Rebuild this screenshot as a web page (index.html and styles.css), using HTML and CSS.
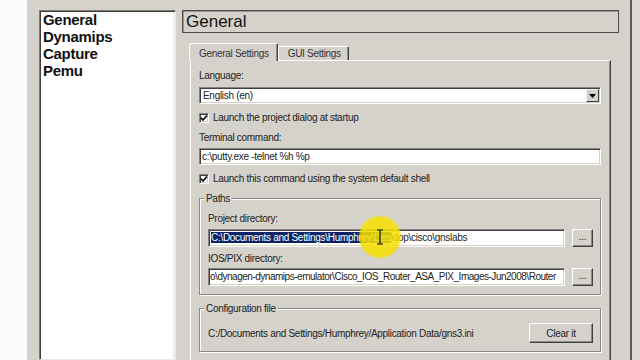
FILE: index.html
```html
<!DOCTYPE html>
<html>
<head>
<meta charset="utf-8">
<link rel="stylesheet" href="styles.css">
</head>
<body>
<div class="screen">
  <div class="outside-left"></div>
  <div class="window">
    <div class="sidebar">
      <ul class="nav">
        <li>General</li>
        <li>Dynamips</li>
        <li>Capture</li>
        <li>Pemu</li>
      </ul>
    </div>
    <div class="main">
      <div class="title">General</div>
      <div class="tabwidget">
        <div class="tabbar">
          <div class="tab active">General Settings</div>
          <div class="tab">GUI Settings</div>
        </div>
        <div class="pane">
          <div class="label">Language:</div>
          <div class="combo sunken">
            <span>English (en)</span>
            <span class="drop"><svg width="7" height="4" viewBox="0 0 7 4"><path d="M0 0H7L3.5 4Z" fill="#000"/></svg></span>
          </div>
          <div class="check">
            <span class="box sunken"><svg width="8" height="8" viewBox="0 0 8 8"><path d="M1 3.8L3 6L7 1.5" fill="none" stroke="#000" stroke-width="1.6"/></svg></span>
            <span>Launch the project dialog at startup</span>
          </div>
          <div class="label gap7">Terminal command:</div>
          <div class="field sunken">c:\putty.exe -telnet %h %p</div>
          <div class="check">
            <span class="box sunken"><svg width="8" height="8" viewBox="0 0 8 8"><path d="M1 3.8L3 6L7 1.5" fill="none" stroke="#000" stroke-width="1.6"/></svg></span>
            <span>Launch this command using the system default shell</span>
          </div>
          <fieldset class="group">
            <legend>Paths</legend>
            <div class="label">Project directory:</div>
            <div class="row first">
              <div class="field sunken"><span class="sel">C:\Documents and Settings\Humphrey\Des</span>ktop\cisco\gnslabs</div>
              <div class="btn dots">...</div>
            </div>
            <div class="label gap5">IOS/PIX directory:</div>
            <div class="row second">
              <div class="field sunken tight">o\dynagen-dynamips-emulator\Cisco_IOS_Router_ASA_PIX_Images-Jun2008\Router</div>
              <div class="btn dots">...</div>
            </div>
          </fieldset>
          <fieldset class="group config">
            <legend>Configuration file</legend>
            <div class="config-row">
              <span>C:/Documents and Settings/Humphrey/Application Data/gns3.ini</span>
              <div class="btn clear">Clear it</div>
            </div>
          </fieldset>
        </div>
      </div>
    </div>
  </div>
  <div class="outside-right"></div>
  <div class="spot">
    <svg width="8" height="16" viewBox="0 0 8 16"><path d="M1 1H7M4 1V15M1 15H7" fill="none" stroke="#111" stroke-width="1.2"/></svg>
  </div>
</div>
</body>
</html>
```
FILE: styles.css
```css
body {
  margin: 0;
  background: #fff;
  font-family: "Liberation Sans", Arial, sans-serif;
}

.screen {
  position: relative;
  display: flex;
  width: 640px;
  height: 360px;
  overflow: hidden;
}

.outside-left {
  flex: 0 0 27px;
  background: #fbfbfb;
}

.window {
  flex: 0 0 605px;
  min-width: 0;
  box-sizing: border-box;
  display: flex;
  gap: 6px;
  padding: 10px 11px 0 12px;
  background: #d5d2cc;
  border-right: 2px solid #5e5c58;
}

.outside-right {
  flex: 1;
  background: #dcd9d4;
}

.sidebar {
  flex: 0 0 137px;
  box-sizing: border-box;
  background: #fff;
  border: 1px solid;
  border-color: #7d7b78 #ebe9e5 #ebe9e5 #7d7b78;
  box-shadow: inset 1px 1px 0 #3f3e3c, inset -2px 0 0 #f1f0ed;
}

.nav {
  list-style: none;
  margin: 0;
  padding: 0 0 0 3px;
  font-weight: bold;
  font-size: 15px;
  line-height: 17px;
  letter-spacing: -0.3px;
  color: #111;
}

.main {
  flex: 1;
  min-width: 0;
  display: flex;
  flex-direction: column;
}

.title {
  height: 23px;
  box-sizing: border-box;
  border: 1px solid #4f4d4a;
  box-shadow: inset 1px 1px 0 #9a9792;
  font-size: 17px;
  line-height: 21px;
  padding-left: 3px;
  color: #111;
}

.tabwidget {
  flex: 1;
  min-width: 0;
  display: flex;
  flex-direction: column;
  margin: 10px 8px 0 7px;
}

.tabbar {
  display: flex;
  align-items: flex-end;
}

.tab {
  box-sizing: border-box;
  height: 14px;
  padding: 0 7px 0 9px;
  font-size: 10px;
  line-height: 13px;
  letter-spacing: -0.3px;
  color: #333;
  border-top: 1px solid #fff;
  border-left: 1px solid #fff;
  border-right: 1px solid #404040;
  box-shadow: inset -1px 0 0 #8a8884;
  border-radius: 2px 2px 0 0;
}

.tab.active {
  position: relative;
  z-index: 1;
  height: 18px;
  margin-bottom: -1px;
  padding: 3px 8px 0 9px;
  background: #d5d2cc;
}

.pane {
  flex: 1;
  min-width: 0;
  margin-left: 1px;
  padding: 8px 9px 0 8px;
  border-top: 1px solid #fff;
  border-left: 1px solid #fff;
  border-right: 1px solid #404040;
  box-shadow: inset -1px 0 0 #8a8884;
  font-size: 10px;
  letter-spacing: -0.3px;
  color: #222;
}

.label {
  line-height: 13px;
}

.gap7 {
  margin-top: 7px;
}

.gap5 {
  margin-top: 5px;
}

.sunken {
  box-sizing: border-box;
  background: #fff;
  border: 1px solid;
  border-color: #848280 #fff #fff #848280;
  box-shadow: inset 1px 1px 0 #404040, inset -1px -1px 0 #d5d2cc;
}

.combo {
  margin-top: 5px;
  height: 17px;
  display: flex;
  align-items: center;
  justify-content: space-between;
  padding: 0 1px 0 3px;
  line-height: 13px;
}

.drop {
  box-sizing: border-box;
  width: 13px;
  height: 13px;
  display: flex;
  align-items: center;
  justify-content: center;
  background: #d5d2cc;
  border: 1px solid;
  border-color: #f3f2ef #404040 #404040 #f3f2ef;
}

.check {
  margin-top: 7px;
  display: flex;
  align-items: center;
  gap: 4px;
  line-height: 13px;
}

.box {
  width: 10px;
  height: 10px;
  display: flex;
  align-items: center;
  justify-content: center;
}

.field {
  margin-top: 4px;
  height: 17px;
  padding: 0 3px 0 2px;
  line-height: 15px;
  white-space: nowrap;
  overflow: hidden;
}

.field.tight {
  padding-left: 1px;
  letter-spacing: -0.48px;
}

.sel {
  background: #0b2467;
  color: #fff;
}

.group {
  margin: 7px 0 0;
  padding: 7px 7px 8px 8px;
  border: 1px solid #8a8884;
  box-shadow: inset 1px 1px 0 #fff, 1px 1px 0 #fff;
  min-width: 0;
  min-inline-size: 0;
}

.group legend {
  margin-left: -4px;
  padding: 0 2px;
  line-height: 13px;
  background: #d5d2cc;
}

.group.config {
  padding-top: 8px;
}

.row {
  display: flex;
  gap: 7px;
  height: 18px;
  min-width: 0;
}

.row.first {
  margin-top: 4px;
}

.row.second {
  margin-top: 3px;
}

.row .field {
  flex: 1 1 0;
  min-width: 0;
  margin-top: 0;
  height: 18px;
  line-height: 16px;
}

.btn {
  box-sizing: border-box;
  display: flex;
  align-items: center;
  justify-content: center;
  background: #d5d2cc;
  border: 1px solid;
  border-color: #fff #404040 #404040 #fff;
  box-shadow: inset -1px -1px 0 #8a8884;
  color: #222;
}

.dots {
  flex: 0 0 21px;
  height: 18px;
  line-height: 12px;
  padding-bottom: 3px;
}

.clear {
  width: 64px;
  height: 20px;
}

.config-row {
  display: flex;
  align-items: center;
  justify-content: space-between;
  height: 20px;
}

.spot {
  position: absolute;
  left: 358px;
  top: 215px;
  width: 44px;
  height: 44px;
  border-radius: 50%;
  display: flex;
  align-items: center;
  justify-content: center;
  background: radial-gradient(circle, rgba(246, 224, 0, 0.86) 62%, rgba(246, 224, 0, 0) 72%);
}
```
